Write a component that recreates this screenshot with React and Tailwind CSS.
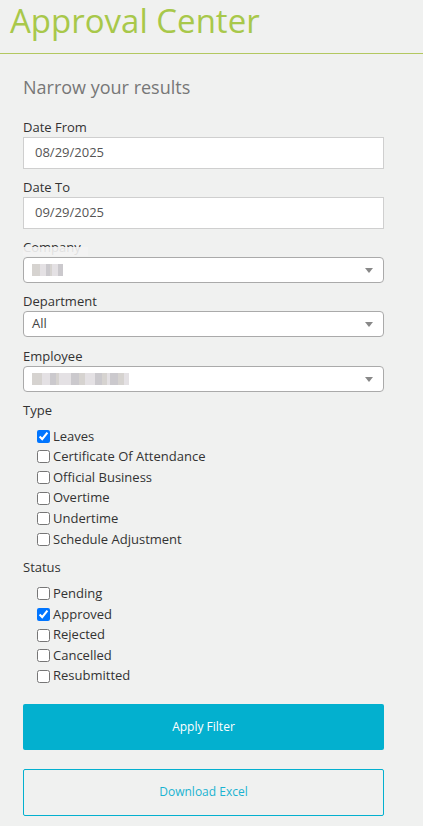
import React from "react";

const font = { fontFamily: '"Open Sans", "Noto Sans", sans-serif' };

function Label({ children }) {
  return <div className="text-[13px] leading-[18px] text-[#333] mb-[1px]">{children}</div>;
}

function TextInput({ value }) {
  return (
    <div className="h-[32px] bg-white border border-[#cfcfcf] flex items-center px-[11px] text-[13px] text-[#555]">
      {value}
    </div>
  );
}

function Blur({ widths }) {
  return (
    <div className="flex items-center gap-0 blur-[0.6px]">
      {widths.map((w, i) => (
        <span
          key={i}
          className={
            "inline-block h-[12px] " +
            (i % 3 === 0 ? "bg-[#d6d3d0]" : i % 3 === 1 ? "bg-[#e4e1e4]" : "bg-[#cbc9cd]")
          }
          style={{ width: w }}
        />
      ))}
    </div>
  );
}

function Select({ children }) {
  return (
    <div className="h-[26px] bg-white border border-[#aaa] rounded-[4px] flex items-center pl-[8px] pr-[10px] text-[13px] text-[#444]">
      <div className="flex-1">{children}</div>
      <svg width="8" height="5" viewBox="0 0 8 5">
        <path d="M0 0 L8 0 L4 5 Z" fill="#888" />
      </svg>
    </div>
  );
}

function Check({ label, checked }) {
  return (
    <label className="flex items-center h-[20.6px] text-[13px] text-[#333]">
      <input type="checkbox" defaultChecked={checked} className="m-0 ml-[4px] mr-[3px] w-[13px] h-[13px]" />
      <span>{label}</span>
    </label>
  );
}

export default function App() {
  return (
    <div className="min-h-[826px] bg-[#f0f1f0] pb-[10px]" style={font}>
      <div className="border-b border-[#b3c860] pb-[16px]">
        <h1 className="pl-[10px] pt-[4px] text-[33px] leading-[33px] text-[#a8c84a] font-normal">Approval Center</h1>
      </div>

      <div className="px-[23px] pt-[21px] w-[407px]">
        <h2 className="text-[18px] leading-[24px] text-[#777] font-normal mb-[19px]">Narrow your results</h2>

        <div className="mb-[9px]">
          <Label>Date From</Label>
          <TextInput value="08/29/2025" />
        </div>
        <div className="mb-[9px]">
          <Label>Date To</Label>
          <TextInput value="09/29/2025" />
        </div>
        <div className="mb-[9px]">
          <div className="relative">
            <Label>Company</Label>
            <div className="absolute left-0 top-[9px] w-[65px] h-[9px] bg-[#f3f3f3]/90 blur-[0.5px]" />
          </div>
          <Select>
            <Blur widths={[8, 6, 4, 2, 6, 5]} />
          </Select>
        </div>
        <div className="mb-[10px]">
          <Label>Department</Label>
          <Select>All</Select>
        </div>
        <div className="mb-[9px]">
          <Label>Employee</Label>
          <Select>
            <Blur widths={[10, 8, 6, 3, 12, 8, 6, 10, 7, 5, 3, 8, 6, 5]} />
          </Select>
        </div>

        <div className="mb-[8px]">
          <div className="text-[13px] leading-[18px] text-[#333] mb-[4px]">Type</div>
          <div className="pl-[10px] pt-[3px]">
            <Check label="Leaves" checked />
            <Check label="Certificate Of Attendance" />
            <Check label="Official Business" />
            <Check label="Overtime" />
            <Check label="Undertime" />
            <Check label="Schedule Adjustment" />
          </div>
        </div>

        <div>
          <div className="text-[13px] leading-[18px] text-[#333] mb-[4px]">Status</div>
          <div className="pl-[10px] pt-[4px]">
            <Check label="Pending" />
            <Check label="Approved" checked />
            <Check label="Rejected" />
            <Check label="Cancelled" />
            <Check label="Resubmitted" />
          </div>
        </div>

        <button className="mt-[17px] w-full h-[46px] bg-[#03b0cf] rounded-[2px] text-white text-[12px]">
          Apply Filter
        </button>
        <button className="mt-[19px] w-full h-[47px] border border-[#03b0cf] rounded-[2px] text-[#1ab3d1] text-[12px]">
          Download Excel
        </button>
      </div>
    </div>
  );
}
